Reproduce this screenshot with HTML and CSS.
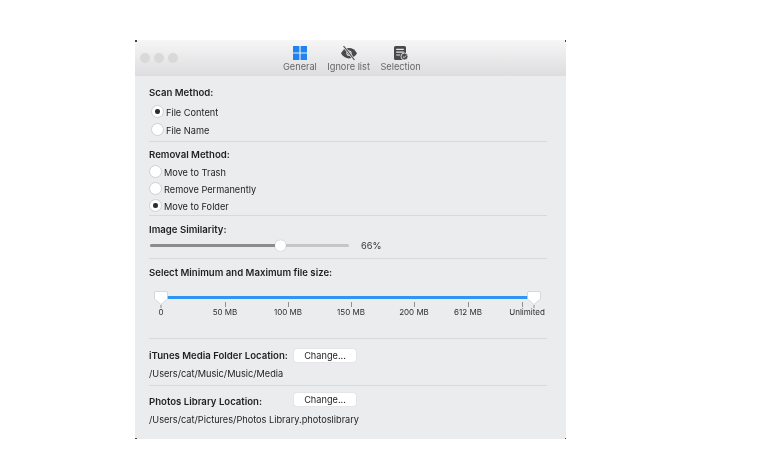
FILE: index.html
```html
<!DOCTYPE html>
<html lang="en">
<head>
<meta charset="utf-8">
<title>Preferences</title>
<link rel="stylesheet" href="styles.css">
</head>
<body>
<div class="window">
  <i class="corner tl"></i><i class="corner tr"></i><i class="corner bl"></i><i class="corner br"></i>
  <header class="titlebar">
    <div class="lights"><span></span><span></span><span></span></div>
    <nav class="tabs">
      <div class="tab tab-general">
        <svg width="14" height="14" viewBox="0 0 14 14"><path fill="#1f84f2" d="M0 0h6.4v6.4H0zM7.6 0H14v6.4H7.6zM0 7.6h6.4V14H0zM7.6 7.6H14V14H7.6z"/></svg>
        <span>General</span>
      </div>
      <div class="tab tab-ignore">
        <svg width="16" height="14" viewBox="0 0 16 14"><path fill="#4a4a4c" d="M0 7.2C1.8 3.8 4.7 2 8 2s6.200 1.800 8 5.200c-1.800 3.400-4.700 5.200-8 5.200S1.800 10.600 0 7.200z"/><circle cx="8" cy="7.200" r="2.600" fill="#e6e6e7"/><circle cx="8" cy="7.200" r="1.600" fill="#4a4a4c"/><path stroke="#e9e9ea" stroke-width="2.400" d="M2.500 0l11 14"/><path stroke="#4a4a4c" stroke-width="1.100" d="M2.500 0l11 14"/></svg>
        <span>Ignore list</span>
      </div>
      <div class="tab tab-selection">
        <svg width="14" height="14" viewBox="0 0 14 14"><path fill="#4a4a4c" d="M1.500 0h9A1.500 1.500 0 0 1 12 1.500V13a1 1 0 0 1-1 1H1.500A1.500 1.500 0 0 1 0 12.500v-11A1.500 1.500 0 0 1 1.500 0z"/><path stroke="#e6e6e7" stroke-width="1.200" d="M2.200 3.400h7.600M2.200 6.200h7.600M2.200 9h4"/><circle cx="10.500" cy="10.500" r="3.500" fill="#4a4a4c" stroke="#e6e6e7" stroke-width=".9"/><path fill="none" stroke="#e6e6e7" stroke-width=".9" d="M8.900 10.600l1.200 1.100 2-2.200"/></svg>
        <span>Selection</span>
      </div>
    </nav>
  </header>

  <main class="content">
    <section class="group scan">
      <h2 class="label">Scan Method:</h2>
      <div class="option indent-scan first"><span class="radio on"></span>File Content</div>
      <div class="option indent-scan second"><span class="radio"></span>File Name</div>
    </section>

    <section class="group removal">
      <h2 class="label">Removal Method:</h2>
      <div class="option first-r"><span class="radio"></span>Move to Trash</div>
      <div class="option"><span class="radio"></span>Remove Permanently</div>
      <div class="option"><span class="radio on"></span>Move to Folder</div>
    </section>

    <section class="group similarity">
      <h2 class="label">Image Similarity:</h2>
      <div class="sim-row">
        <div class="sim-track"><div class="sim-fill"></div><span class="sim-thumb"></span></div>
        <span class="sim-value">66%</span>
      </div>
    </section>

    <section class="group filesize">
      <h2 class="label">Select Minimum and Maximum file size:</h2>
      <div class="range">
        <div class="range-track"></div>
        <svg class="handle handle-min" width="14" height="17" viewBox="0 0 14 17"><path fill="#fff" stroke="#c4c4c6" stroke-width=".6" d="M2 .5h10A1.500 1.500 0 0 1 13.500 2v6L7 13.500.5 8V2A1.500 1.500 0 0 1 2 .5z"/><path stroke="#8f8f91" d="M7 14v3"/></svg>
        <svg class="handle handle-max" width="14" height="17" viewBox="0 0 14 17"><path fill="#fff" stroke="#c4c4c6" stroke-width=".6" d="M2 .5h10A1.500 1.500 0 0 1 13.500 2v6L7 13.500.5 8V2A1.500 1.500 0 0 1 2 .5z"/><path stroke="#8f8f91" d="M7 14v3"/></svg>
        <div class="scale">
          <div class="stop"><i></i><span>0</span></div>
          <div class="stop"><i></i><span>50 MB</span></div>
          <div class="stop"><i></i><span>100 MB</span></div>
          <div class="stop"><i></i><span>150 MB</span></div>
          <div class="stop"><i></i><span>200 MB</span></div>
          <div class="stop"><i></i><span>612 MB</span></div>
          <div class="stop stop-last"><i></i><span>Unlimited</span></div>
        </div>
      </div>
    </section>

    <section class="group location itunes">
      <div class="loc-row"><h2 class="label loc-label">iTunes Media Folder Location:</h2><button class="btn">Change...</button></div>
      <p class="path">/Users/cat/Music/Music/Media</p>
    </section>

    <section class="location photos">
      <div class="loc-row"><h2 class="label loc-label">Photos Library Location:</h2><button class="btn btn-photos">Change...</button></div>
      <p class="path">/Users/cat/Pictures/Photos Library.photoslibrary</p>
    </section>
  </main>
</div>
</body>
</html>
```

FILE: styles.css
```css
* { box-sizing: border-box; }
html, body { margin: 0; background: #fff; }
body {
  width: 760px;
  height: 474px;
  padding: 40px 0 0 135px;
  font-family: Inter, "Liberation Sans", sans-serif;
  color: #232325;
  overflow: hidden;
}
.window {
  position: relative;
  width: 431px;
  height: 399px;
  background: #ebecee;
  filter: blur(.3px);
}
.corner { position: absolute; z-index: 1; width: 1.500px; height: 1.500px; background: #444; }
.tl { left: 0; top: 0; }
.tr { right: 0; top: 0; }
.bl { left: 0; bottom: 0; }
.br { right: 0; bottom: 0; }

.titlebar {
  height: 36px;
  position: relative;
  background: linear-gradient(#f6f6f7, #dddddf);
}
.lights { position: absolute; left: 5px; top: 13px; display: flex; gap: 4px; }
.lights span { width: 10px; height: 10px; border-radius: 50%; background: #d9d9da; }
.tabs { display: flex; position: absolute; left: 148px; top: 6px; gap: 10.500px; }
.tab { display: flex; flex-direction: column; align-items: center; font-size: 9.200px; color: #66666a; line-height: 12px; }
.tab svg { display: block; margin-bottom: 1px; }

.content { padding: 0 19px 0 14px; }
.group { border-bottom: 1px solid #d9d9db; }
.label { margin: 0; font-size: 9.600px; font-weight: 600; line-height: 13px; color: #1f1f21; }
.option { display: flex; align-items: center; font-size: 9.200px; line-height: 13px; height: 17px; gap: 2px; }
.radio {
  width: 13px; height: 13px; margin-bottom: 2px; border-radius: 50%;
  background: #fff; border: .5px solid #d0d0d2;
  display: flex; align-items: center; justify-content: center; flex: none;
}
.radio.on::after { content: ""; width: 4.500px; height: 4.500px; border-radius: 50%; background: #2c2c2e; }

.scan { height: 66px; padding-top: 10px; }
.indent-scan { padding-left: 2px; }
.first { margin-top: 5px; }
.second { margin-top: 1px; }

.removal { height: 74px; padding-top: 6px; }
.first-r { margin-top: 3px; }

.similarity { height: 43px; padding-top: 7px; }
.sim-row { display: flex; align-items: center; margin-top: 1px; height: 16px; }
.sim-track { position: relative; width: 199px; height: 3px; margin-left: 1px; border-radius: 2px; background: #c6c6c8; }
.sim-fill { width: 130px; height: 3px; border-radius: 2px; background: #8c8c8e; }
.sim-thumb { position: absolute; left: 125px; top: -4px; width: 11px; height: 11px; border-radius: 50%; background: #fff; box-shadow: 0 0 1px #9a9a9c; }
.sim-value { margin-left: 12px; font-size: 9.200px; color: #333335; }

.filesize { height: 80px; padding-top: 7px; }
.range { position: relative; margin-top: 17px; }
.range-track { height: 3px; margin: 0 12px; background: #2f95f5; width: 373px; }
.handle { position: absolute; top: -5px; }
.handle-min { left: 5px; }
.handle-max { left: 378px; }
.scale {
  display: grid;
  grid-template-columns: 64px 63px 63px 63px 54px 54px 1px;
  margin: 3px 0 0 12px;
}
.stop { width: 0; display: flex; flex-direction: column; align-items: center; }
.stop i { display: block; width: 1px; height: 5px; background: #8f8f91; flex: none; }
.stop span { font-size: 8px; line-height: 11px; white-space: nowrap; color: #2e2e30; }
.stop:first-child i { background: transparent; }
.stop-last span { margin-left: 10px; }

.location { padding-top: 9px; }
.itunes { height: 47px; }
.loc-row { display: flex; align-items: center; height: 14px; }
.loc-label { width: 145px; flex: none; }
.btn {
  width: 62px; height: 13px; padding: 0; border: 0; border-radius: 2px;
  background: #fff; font: 9.200px/13px Inter, "Liberation Sans", sans-serif; color: #232325;
  box-shadow: 0 0 1px #b5b5b7;
}
.btn-photos { margin-top: -4px; }
.path { margin: 5px 0 0; font-size: 9.200px; line-height: 13px; color: #232325; }
.photos { padding-top: 8px; }
```
